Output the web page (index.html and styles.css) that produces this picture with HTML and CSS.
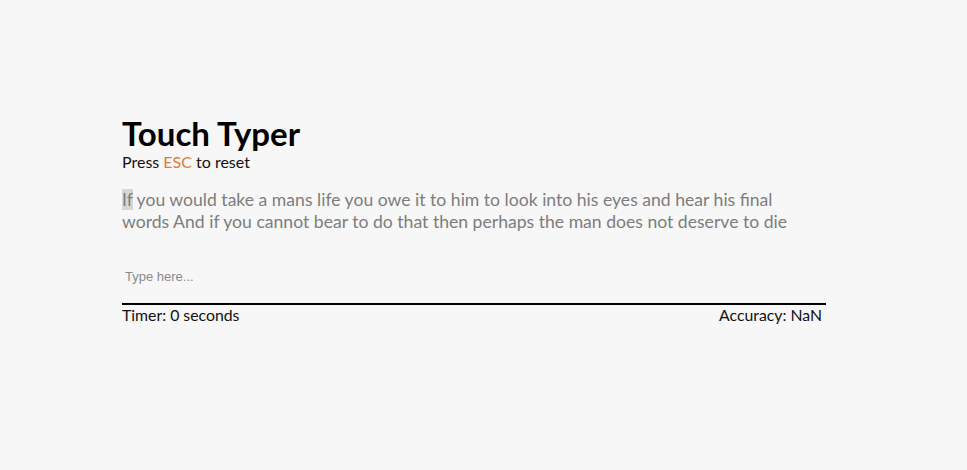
FILE: index.html
```html
<!DOCTYPE html>
<html>
<head>
<meta charset="utf-8">
<link rel="stylesheet" href="styles.css">
</head>
<body>
<main class="app">
  <h1 class="title">Touch Typer</h1>
  <p class="hint">Press <span class="key">ESC</span> to reset</p>
  <p class="quote"><span class="current">If</span> you would take a mans life you owe it to him to look into his eyes and hear his final words And if you cannot bear to do that then perhaps the man does not deserve to die</p>
  <input class="entry" type="text" placeholder="Type here...">
  <div class="stats">
    <span class="stat">Timer: 0 seconds</span>
    <span class="stat">Accuracy: NaN</span>
  </div>
</main>
</body>
</html>
```

FILE: styles.css
```css
html, body {
  margin: 0;
  padding: 0;
  background: #f7f7f7;
}
body {
  font-family: Lato, "Open Sans", sans-serif;
  color: #111;
}
.app {
  width: 704px;
  margin: 0 0 0 122px;
  padding-top: 114px;
  display: flex;
  flex-direction: column;
}
.title {
  font-size: 33px;
  font-weight: 700;
  margin: 0;
  line-height: 38px;
  color: #000;
}
.hint {
  margin: 0;
  font-size: 16px;
  line-height: 20px;
}
.key {
  color: #e0793a;
}
.quote {
  margin: 17px 0 0 0;
  font-size: 17.6px;
  line-height: 22px;
  color: #7d7d7d;
  max-width: 690px;
}
.current {
  background: #d6d6d6;
}
.entry {
  margin-top: 34px;
  border: none;
  border-bottom: 2px solid #000;
  background: transparent;
  outline: none;
  padding: 0 0 18px 3px;
  font-family: "Liberation Sans", Arial, sans-serif;
  font-size: 13px;
  height: 18px;
}
.entry::placeholder {
  color: #8a8a8a;
}
.stats {
  display: flex;
  justify-content: space-between;
  font-size: 15.8px;
  line-height: 20px;
  padding-right: 4px;
  color: #111;
}
```
